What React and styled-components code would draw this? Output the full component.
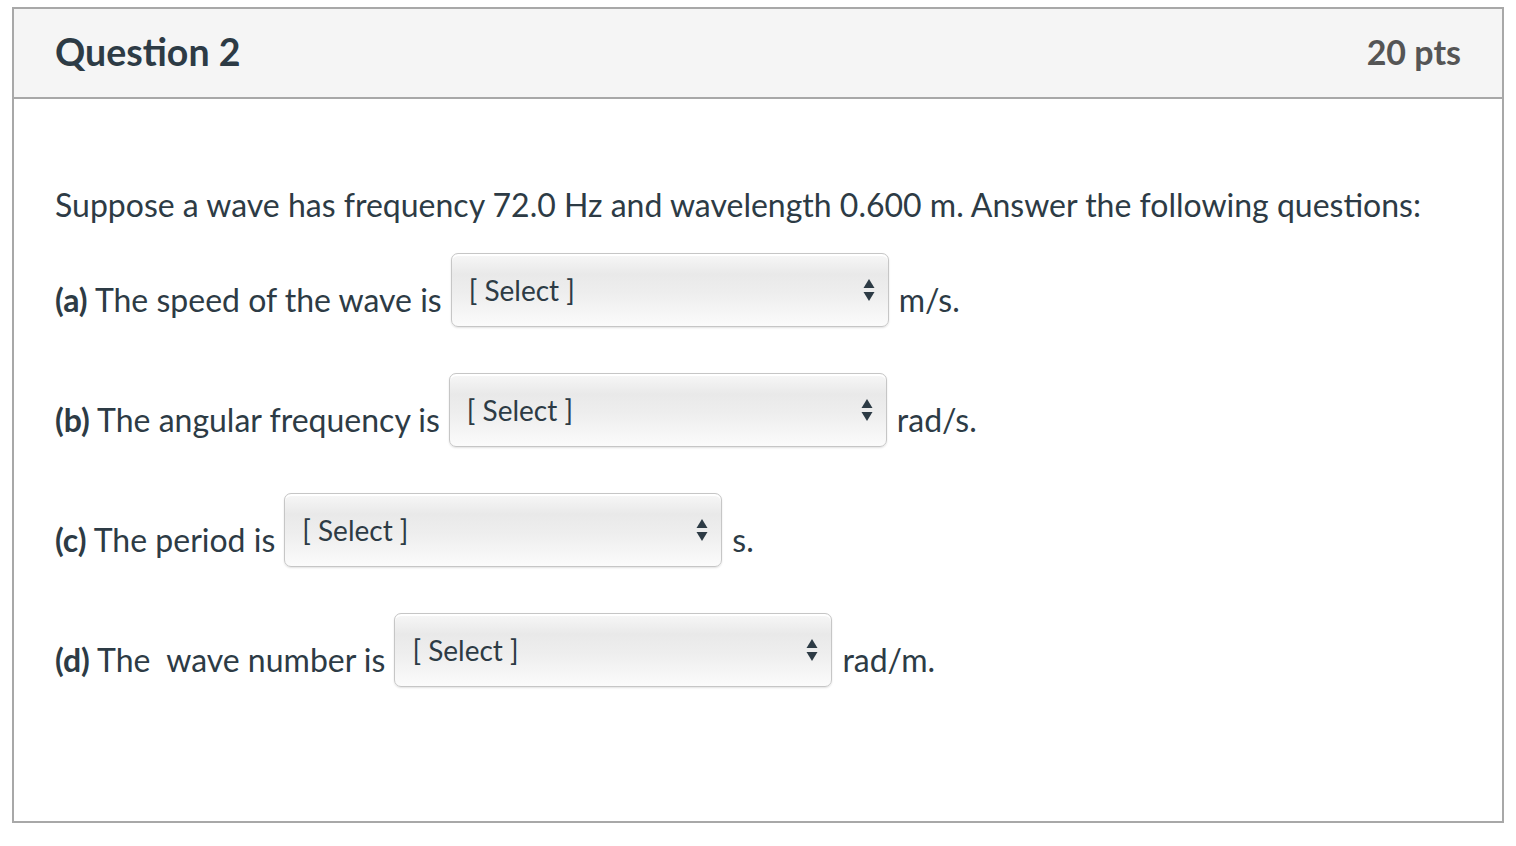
import React from 'react';
import styled, { createGlobalStyle } from 'styled-components';

const GlobalStyle = createGlobalStyle`
  body {
    margin: 0;
    background: #fff;
    font-family: Lato, "Open Sans", sans-serif;
    color: #2d3b45;
  }
`;

const Card = styled.div`
  margin: 7px 0 0 12px;
  width: 1488px;
  height: 812px;
  border: 2px solid #a8a8a8;
  box-sizing: content-box;
`;

const Header = styled.div`
  height: 88px;
  padding: 0 41px 0 41px;
  display: flex;
  align-items: center;
  justify-content: space-between;
  background: #f5f5f5;
  border-bottom: 2px solid #a8a8a8;
`;

const Title = styled.h2`
  margin: -3px 0 0;
  font-size: 37.5px;
  font-weight: 700;
  color: #2d3b45;
`;

const Points = styled.div`
  margin-top: -3px;
  font-size: 34px;
  font-weight: 700;
  color: #555555;
`;

const Body = styled.div`
  padding: 88px 41px 0;
  font-size: 32px;
`;

const Intro = styled.p`
  margin: 0 0 30px;
  line-height: 36px;
`;

const Row = styled.div`
  display: flex;
  align-items: center;
  height: 74px;
  margin-bottom: 46px;
`;

const Text = styled.span`
  margin-top: 18px;
  white-space: pre;
`;

const Label = styled.b`
  font-weight: 700;
`;

const Select = styled.div`
  width: 438px;
  height: 74px;
  box-sizing: border-box;
  margin: 0 10px 0 9px;
  padding: 0 13px 0 17px;
  display: flex;
  align-items: center;
  justify-content: space-between;
  border: 1px solid #c6c6c6;
  border-radius: 7px;
  background: linear-gradient(to bottom, #f7f7f7 0%, #e9e9e9 28%, #eeeeee 55%, #fbfbfb 100%);
  box-shadow: inset 0 2px 0 #ffffff, 0 1px 2px rgba(0, 0, 0, 0.12);
  font-size: 28px;
  color: #2d3b45;
`;

const SelectText = styled.span`
  margin-top: -1px;
`;

const Arrows = styled.svg`
  width: 12px;
  height: 24px;
  display: block;
`;

const Caret = () => (
  <Arrows viewBox="0 0 12 24">
    <path d="M6 1 L11.5 10 L0.5 10 Z" fill="#2d3b45" />
    <path d="M0.5 14 L11.5 14 L6 23 Z" fill="#2d3b45" />
  </Arrows>
);

const rows = [
  { tag: '(a)', text: ' The speed of the wave is', unit: 'm/s.' },
  { tag: '(b)', text: ' The angular frequency is', unit: 'rad/s.' },
  { tag: '(c)', text: ' The period is', unit: 's.' },
  { tag: '(d)', text: ' The  wave number is', unit: 'rad/m.' },
];

export default function App() {
  return (
    <>
      <GlobalStyle />
      <Card>
        <Header>
          <Title>Question 2</Title>
          <Points>20 pts</Points>
        </Header>
        <Body>
          <Intro>
            Suppose a wave has frequency 72.0 Hz and wavelength 0.600 m. Answer the following questions:
          </Intro>
          {rows.map((r) => (
            <Row key={r.tag}>
              <Text>
                <Label>{r.tag}</Label>
                {r.text}
              </Text>
              <Select>
                <SelectText>[ Select ]</SelectText>
                <Caret />
              </Select>
              <Text>{r.unit}</Text>
            </Row>
          ))}
        </Body>
      </Card>
    </>
  );
}
